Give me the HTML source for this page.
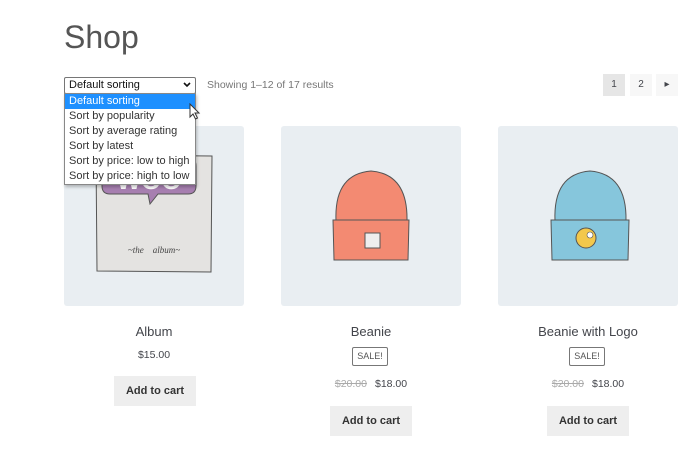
<!DOCTYPE html>
<html><head><meta charset="utf-8"><style>
*{margin:0;padding:0;box-sizing:border-box}
body{width:696px;height:474px;background:#fff;font-family:"Liberation Sans",sans-serif;color:#43454b;position:relative;overflow:hidden}
.a{position:absolute}
h1{position:absolute;left:64px;top:19px;font-size:32px;font-weight:normal;color:#555;letter-spacing:0}
.sel{left:64px;top:77px;width:132px;height:17px;border:1px solid #767676;border-radius:2px;font-size:11px;padding:1px 4px;color:#111;background:#fff}
.dd{left:64px;top:93px;width:132px;height:92px;border:1px solid #888;background:#fff;font-size:11px;color:#333;box-shadow:1px 2px 3px rgba(0,0,0,.25);z-index:5}
.dd div{height:15px;line-height:15px;padding-left:4px}
.dd .on{background:#1e90ff;color:#fff}
.res{left:207px;top:79px;font-size:10.5px;color:#777}
.pg{top:74px;width:22px;height:22px;font-size:10px;text-align:center;line-height:22px;background:#f7f7f7;color:#43454b}
.img{top:126px;width:180px;height:180px;background:#e9eef2;border-radius:3px}
.t{width:180px;text-align:center;font-size:13px;color:#43454b}
.p{width:180px;text-align:center;font-size:10.5px;color:#43454b}
.p s{color:#aaa;margin-right:8px}
.sale{width:36px;height:19px;border:1px solid #777;border-radius:2px;font-size:9px;text-align:center;line-height:17px;color:#555}
.btn{width:82px;height:30px;background:#eeeeee;font-size:11px;font-weight:bold;text-align:center;line-height:30px;color:#333}
</style></head><body>
<h1>Shop</h1>
<div class="a sel">Default sorting<svg style="position:absolute;right:4px;top:4px" width="8" height="6" viewBox="0 0 8 6"><path d="M1 1 L4 4 L7 1" fill="none" stroke="#111" stroke-width="1.6"/></svg></div>
<div class="a dd">
<div class="on">Default sorting</div><div>Sort by popularity</div><div>Sort by average rating</div><div>Sort by latest</div><div>Sort by price: low to high</div><div>Sort by price: high to low</div>
</div>
<svg class="a" style="left:189px;top:103px;z-index:6" width="12" height="18" viewBox="0 0 12 18"><path d="M1 1 L1 14 L4 11 L6.5 16 L8.5 15 L6 10 L10 10 Z" fill="#fff" stroke="#333" stroke-width="1"/></svg>
<div class="a res">Showing 1–12 of 17 results</div>
<div class="a pg" style="left:603px;background:#e6e6e6">1</div>
<div class="a pg" style="left:630px">2</div>
<div class="a pg" style="left:656px">&#9656;</div>

<div class="a img" style="left:64px">
<svg width="180" height="180"><path d="M32 29 L148 30 L147 146 L33 145 Z" fill="#e4e3e1" stroke="#555" stroke-width="1"/>
<path d="M38 40 Q38 32 46 32 L124 32 Q132 32 132 40 L132 60 Q132 68 124 68 L94 68 L86 78 L84 68 L46 68 Q38 68 38 60 Z" fill="#a77fb0" stroke="#555"/>
<text x="85" y="63" text-anchor="middle" font-family="Liberation Sans" font-weight="bold" font-size="26" fill="#fff">WOO</text>
<text x="90" y="127" text-anchor="middle" font-family="Liberation Serif" font-style="italic" font-size="9" fill="#444">~the &#160;&#160; album~</text></svg></div>
<div class="a img" style="left:281px">
<svg width="180" height="180"><path d="M55 95 Q53 48 90 45 Q127 48 126 95 Z" fill="#f38a72" stroke="#555"/>
<path d="M52 94 L128 94 L127 134 L53 134 Z" fill="#f38a72" stroke="#555"/><rect x="84" y="107" width="15" height="15" fill="#eee" stroke="#555"/></svg></div>
<div class="a img" style="left:498px">
<svg width="180" height="180"><path d="M57 95 Q55 48 92 45 Q129 48 128 95 Z" fill="#86c6dc" stroke="#555"/>
<path d="M53 94 L131 94 L130 134 L54 134 Z" fill="#86c6dc" stroke="#555"/><circle cx="88" cy="112" r="10" fill="#f3c84b" stroke="#555"/><circle cx="92" cy="109" r="3" fill="#fff" stroke="#555" stroke-width=".6"/></svg></div>

<div class="a t" style="left:64px;top:324px">Album</div>
<div class="a p" style="left:64px;top:349px">$15.00</div>
<div class="a btn" style="left:114px;top:376px">Add to cart</div>

<div class="a t" style="left:281px;top:324px">Beanie</div>
<div class="a sale" style="left:352px;top:347px">SALE!</div>
<div class="a p" style="left:281px;top:378px"><s>$20.00</s>$18.00</div>
<div class="a btn" style="left:330px;top:406px">Add to cart</div>

<div class="a t" style="left:498px;top:324px">Beanie with Logo</div>
<div class="a sale" style="left:569px;top:347px">SALE!</div>
<div class="a p" style="left:498px;top:378px"><s>$20.00</s>$18.00</div>
<div class="a btn" style="left:547px;top:406px">Add to cart</div>
</body></html>
